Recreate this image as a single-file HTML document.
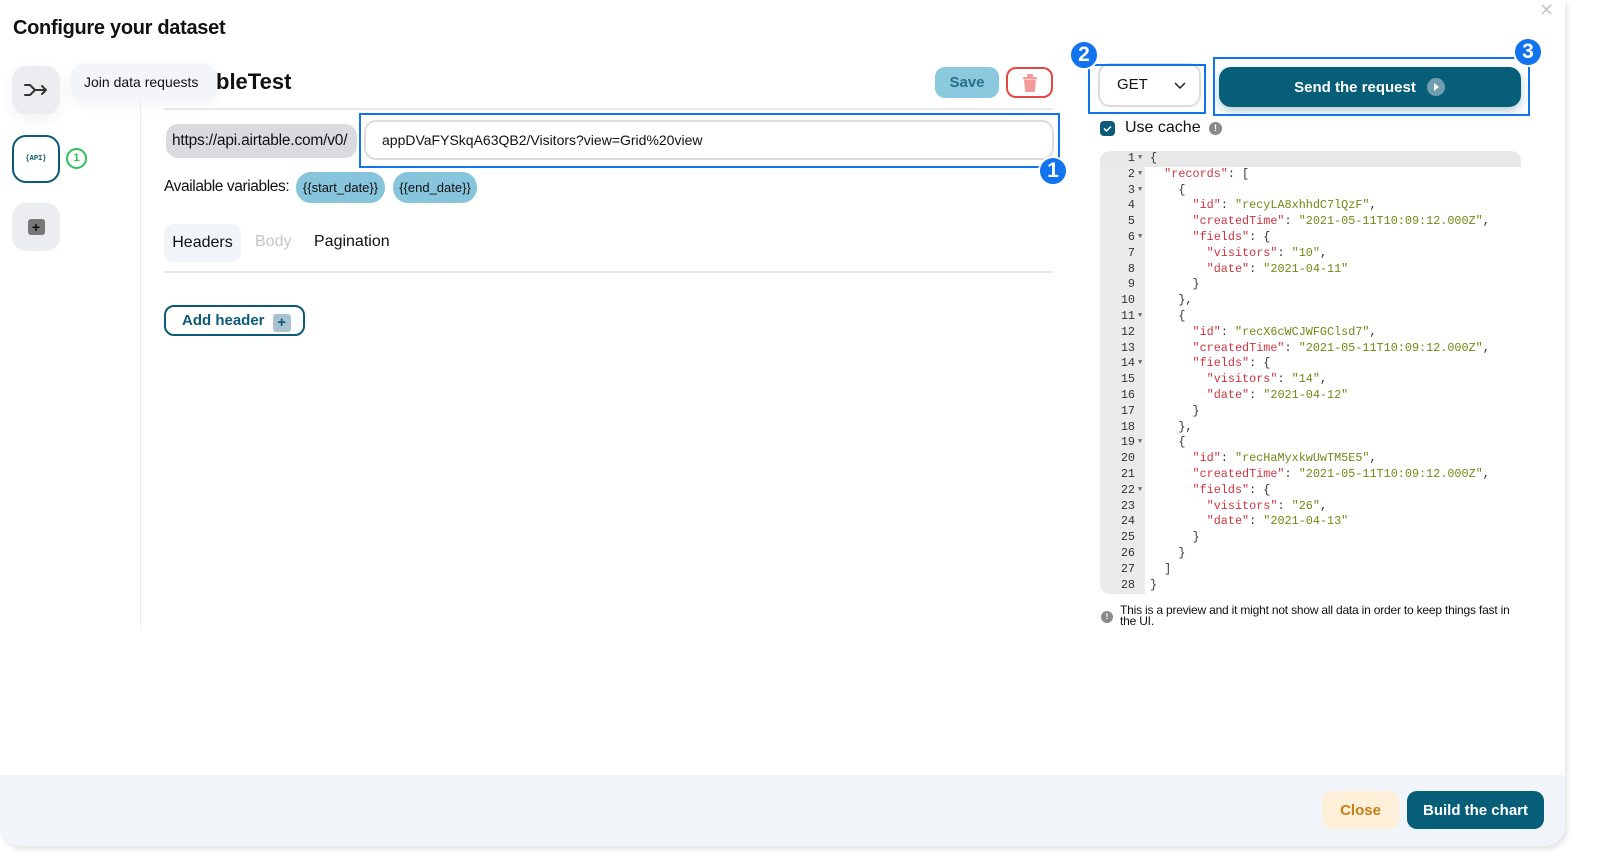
<!DOCTYPE html>
<html><head><meta charset="utf-8"><style>
*{box-sizing:border-box;margin:0;padding:0}
body{width:1600px;height:863px;background:#fff;font-family:"Liberation Sans",sans-serif;position:relative;overflow:hidden;color:#111}
.modal{position:absolute;left:0;top:0;width:1565px;height:846px;background:#fff;border-radius:0 0 20px 20px;box-shadow:2px 3px 6px rgba(0,0,0,.12);overflow:hidden}
.abs{position:absolute}
h1{position:absolute;left:13px;top:17px;font-size:20px;font-weight:700;letter-spacing:-.3px}
.side{position:absolute;left:12px;width:48px;height:48px;border-radius:14px;background:#ebedf0;display:flex;align-items:center;justify-content:center}
.footer{position:absolute;left:0;top:775px;width:1565px;height:71px;background:#f1f4f9}
.btn{position:absolute;border-radius:10px;display:flex;align-items:center;justify-content:center;font-weight:700;font-size:15px}
.code{position:absolute;left:1100px;top:151px;width:421px;height:443px;font-family:"Liberation Mono",monospace;font-size:11.8px}
.gut{position:absolute;left:0;top:0;width:45px;height:443px;background:#ebebeb;border-radius:10px 0 0 10px}
.ln{position:absolute;left:0;height:15.8px;line-height:15.8px;width:100%;white-space:pre}
.num{position:absolute;text-align:right;color:#333}
.ar{position:absolute;left:38px;color:#666;font-size:7px}
.tx{position:absolute;left:50px;color:#333}
.k{color:#d0343f}.s{color:#6f8a12}
.hl{border:2.5px solid #1273ee;position:absolute}
.badge{position:absolute;width:30px;height:30px;border-radius:50%;background:#1273ee;color:#fff;font-weight:700;font-size:21px;display:flex;align-items:center;justify-content:center;border:2px solid #fff}
</style></head><body>
<div class="modal">
<h1>Configure your dataset</h1>
<div class="abs" style="left:1539px;top:0px;color:#c8c8c8;font-size:18px">✕</div>

<div class="side" style="top:66px;box-shadow:0 4px 14px rgba(0,0,0,.06)"><svg width="26" height="18" viewBox="0 0 26 18"><path d="M2 4h5l5 5h11M2 14h5l5-5M19 5l4 4-4 4" fill="none" stroke="#333" stroke-width="2" stroke-linecap="round" stroke-linejoin="round"/></svg></div>
<div class="abs" style="left:70px;top:64px;width:148px;height:36px;background:#f3f5f9;border-radius:14px;font-size:14px;line-height:36px;padding-left:14px;box-shadow:0 4px 14px rgba(0,0,0,.05)">Join data requests</div>
<div class="side" style="top:135px;background:#fff;border:2.5px solid #0a5a78"><span style="font-family:'Liberation Mono',monospace;font-size:7px;font-weight:700;color:#0a5a78">{API}</span></div>
<div class="abs" style="left:66px;top:148px;width:21px;height:21px;border-radius:50%;border:2px solid #2bbf5f;color:#2bbf5f;font-size:11px;font-weight:700;text-align:center;line-height:17px">1</div>
<div class="side" style="top:203px"><div style="width:17px;height:16px;background:#777;border-radius:3px;color:#111;font-size:14px;line-height:16px;text-align:center;font-weight:700">+</div></div>
<div class="abs" style="left:140px;top:100px;width:1px;height:530px;background:#eceef0"></div>

<div class="abs" style="left:216px;top:69px;font-size:22px;font-weight:700">bleTest</div>
<div class="btn" style="left:935px;top:67px;width:64px;height:31px;background:#8ac9de;color:#2a6f88">Save</div>
<div class="btn" style="left:1006px;top:67px;width:47px;height:31px;border:2px solid #e84545;background:#fff"><svg width="18" height="20" viewBox="0 0 18 20"><rect x="2" y="4" width="14" height="2.5" rx="1" fill="#f59a9a"/><rect x="6" y="1" width="6" height="3" rx="1" fill="#f59a9a"/><path d="M3 7h12l-1.3 12H4.3z" fill="#f59a9a"/></svg></div>
<div class="abs" style="left:164px;top:108px;width:889px;height:2px;background:#e6e7e9"></div>

<div class="abs" style="left:166px;top:124px;width:191px;height:34px;background:#d9dbdf;border-radius:12px;font-size:15.5px;line-height:34px;padding-left:6px;letter-spacing:-.2px;white-space:nowrap">https://api.airtable.com/v0/</div>
<div class="abs" style="left:364px;top:120px;width:690px;height:40px;border:2px solid #dcdcdc;border-radius:12px;font-size:14px;line-height:36px;padding-left:16px">appDVaFYSkqA63QB2/Visitors?view=Grid%20view</div>
<div class="hl" style="left:359px;top:113px;width:701px;height:55px"></div>
<div class="badge" style="left:1038px;top:156px">1</div>

<div class="abs" style="left:164px;top:178px;font-size:15.5px;letter-spacing:-.4px;white-space:nowrap">Available variables:</div>
<div class="abs" style="left:296px;top:172px;width:89px;height:31px;background:#86c5dc;border-radius:15px;font-size:13px;line-height:31px;text-align:center">{{start_date}}</div>
<div class="abs" style="left:393px;top:172px;width:84px;height:31px;background:#86c5dc;border-radius:15px;font-size:13px;line-height:31px;text-align:center">{{end_date}}</div>

<div class="abs" style="left:164px;top:224px;width:77px;height:38px;background:#f1f4f9;border-radius:10px;font-size:16px;line-height:38px;text-align:center">Headers</div>
<div class="abs" style="left:255px;top:233px;font-size:16px;color:#c4c6ca">Body</div>
<div class="abs" style="left:314px;top:233px;font-size:16px">Pagination</div>
<div class="abs" style="left:164px;top:271px;width:889px;height:2px;background:#e6e7e9"></div>

<div class="abs" style="left:164px;top:305px;width:141px;height:31px;border:2px solid #0a5a78;border-radius:10px;font-size:15px;font-weight:700;color:#0a5a78;line-height:27px;padding-left:16px">Add header <span style="display:inline-block;width:18px;height:18px;background:#a8c3cf;border-radius:3px;text-align:center;line-height:18px;margin-left:4px;vertical-align:-2px">+</span></div>

<div class="abs" style="left:1098px;top:63px;width:103px;height:44px;border:2px solid #dcdcdc;border-radius:12px;font-size:15px;line-height:40px;padding-left:17px">GET<svg style="position:absolute;left:74px;top:15px" width="12" height="10" viewBox="0 0 12 10"><path d="M1 3l5 5 5-5" fill="none" stroke="#222" stroke-width="1.5"/></svg></div>
<div class="hl" style="left:1088px;top:64px;width:118px;height:50px"></div>
<div class="badge" style="left:1069px;top:40px">2</div>
<div class="btn" style="left:1219px;top:67px;width:302px;height:40px;background:#075e78;color:#fff;border-radius:12px;box-shadow:0 4px 10px rgba(7,94,120,.3)">Send the request<svg style="margin-left:10px" width="20" height="20" viewBox="0 0 20 20"><circle cx="10" cy="10" r="9" fill="#6f9cae"/><path d="M8 6l5 4-5 4z" fill="#fff"/></svg></div>
<div class="hl" style="left:1213px;top:57px;width:317px;height:59px"></div>
<div class="badge" style="left:1513px;top:37px">3</div>

<div class="abs" style="left:1100px;top:121px;width:15px;height:15px;background:#0a5a78;border-radius:4px"><svg width="15" height="15" viewBox="0 0 15 15"><path d="M4 7.5l2.5 2.5 4.5-4.5" fill="none" stroke="#fff" stroke-width="1.5"/></svg></div>
<div class="abs" style="left:1125px;top:119px;font-size:16px">Use cache</div>
<div class="abs" style="left:1209px;top:122px;width:13px;height:13px;border-radius:50%;background:#8a8a8a;color:#fff;font-size:9px;font-weight:700;text-align:center;line-height:13px">!</div>

<div class="code">
<div class="gut"></div>
<div class="abs" style="left:0;top:0;width:421px;height:15.8px;background:#e8e8e8;border-radius:10px 10px 0 0"></div>
<div id="lines"></div>
</div>

<div class="abs" style="left:1101px;top:611px;width:12px;height:12px;border-radius:50%;background:#8a8a8a;color:#fff;font-size:8px;font-weight:700;text-align:center;line-height:12px">!</div>
<div class="abs" style="left:1120px;top:605px;width:405px;font-size:12px;line-height:10.5px;letter-spacing:-.2px">This is a preview and it might not show all data in order to keep things fast in the UI.</div>

<div class="footer"></div>
<div class="btn" style="left:1322px;top:791px;width:77px;height:38px;background:#fdefd8;color:#c47f14">Close</div>
<div class="btn" style="left:1407px;top:791px;width:137px;height:38px;background:#075e78;color:#fff">Build the chart</div>
</div>
<script>
var L=[
['{',1],
['  <span class=k>"records"</span>: [',1],
['    {',1],
['      <span class=k>"id"</span>: <span class=s>"recyLA8xhhdC7lQzF"</span>,'],
['      <span class=k>"createdTime"</span>: <span class=s>"2021-05-11T10:09:12.000Z"</span>,'],
['      <span class=k>"fields"</span>: {',1],
['        <span class=k>"visitors"</span>: <span class=s>"10"</span>,'],
['        <span class=k>"date"</span>: <span class=s>"2021-04-11"</span>'],
['      }'],
['    },'],
['    {',1],
['      <span class=k>"id"</span>: <span class=s>"recX6cWCJWFGClsd7"</span>,'],
['      <span class=k>"createdTime"</span>: <span class=s>"2021-05-11T10:09:12.000Z"</span>,'],
['      <span class=k>"fields"</span>: {',1],
['        <span class=k>"visitors"</span>: <span class=s>"14"</span>,'],
['        <span class=k>"date"</span>: <span class=s>"2021-04-12"</span>'],
['      }'],
['    },'],
['    {',1],
['      <span class=k>"id"</span>: <span class=s>"recHaMyxkwUwTM5E5"</span>,'],
['      <span class=k>"createdTime"</span>: <span class=s>"2021-05-11T10:09:12.000Z"</span>,'],
['      <span class=k>"fields"</span>: {',1],
['        <span class=k>"visitors"</span>: <span class=s>"26"</span>,'],
['        <span class=k>"date"</span>: <span class=s>"2021-04-13"</span>'],
['      }'],
['    }'],
['  ]'],
['}']];
var h='';L.forEach(function(l,i){h+='<div class="ln" style="top:'+(i*15.8)+'px"><span class="num" style="right:'+(421-35)+'px">'+(i+1)+'</span>'+(l[1]?'<span class="ar">▼</span>':'')+'<span class="tx">'+l[0]+'</span></div>';});
document.getElementById('lines').innerHTML=h;
</script>
</body></html>
